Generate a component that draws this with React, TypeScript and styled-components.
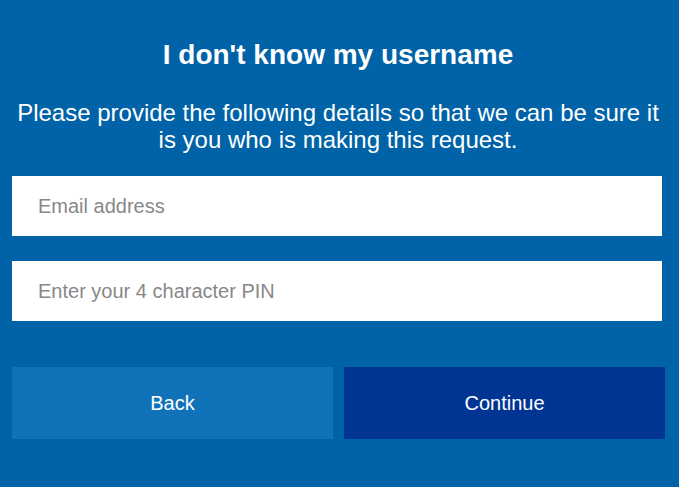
import React from "react";
import styled, { createGlobalStyle } from "styled-components";

const Global = createGlobalStyle`
  html, body { margin: 0; padding: 0; background: #0062a7; }
  body { font-family: "Liberation Sans", Arial, sans-serif; }
  * { box-sizing: border-box; }
`;

const Page = styled.div`
  width: 679px;
  height: 487px;
  background: #0062a7;
  padding: 39px 15px 0 12px;
  display: flex;
  flex-direction: column;
`;

const Title = styled.h1`
  margin: 0;
  color: #fff;
  font-size: 28px;
  font-weight: bold;
  text-align: center;
  line-height: 32px;
`;

const Intro = styled.p`
  margin: 28px 0 0 0;
  color: #fff;
  font-size: 24px;
  line-height: 27px;
  text-align: center;
`;

const Form = styled.div`
  margin-top: 23px;
  display: flex;
  flex-direction: column;
  gap: 25px;
  width: 650px;
`;

const Field = styled.input`
  display: block;
  width: 650px;
  height: 60px;
  border: none;
  outline: none;
  background: #fff;
  padding: 0 26px;
  font-family: "Liberation Sans", Arial, sans-serif;
  font-size: 20px;
  color: #333;
  &::placeholder { color: #888; opacity: 1; }
`;

const Actions = styled.div`
  margin-top: 46px;
  display: grid;
  grid-template-columns: 321px 321px;
  column-gap: 11px;
`;

const Button = styled.button<{ $primary?: boolean }>`
  height: 72px;
  border: none;
  background: ${(p) => (p.$primary ? "#003594" : "#1073b9")};
  color: #fff;
  font-family: "Liberation Sans", Arial, sans-serif;
  font-size: 20px;
  cursor: pointer;
`;

export default function App() {
  return (
    <>
      <Global />
      <Page>
        <Title>I don't know my username</Title>
        <Intro>
          Please provide the following details so that we can be sure it is you who is making this request.
        </Intro>
        <Form>
          <Field type="email" placeholder="Email address" />
          <Field type="text" placeholder="Enter your 4 character PIN" />
        </Form>
        <Actions>
          <Button>Back</Button>
          <Button $primary>Continue</Button>
        </Actions>
      </Page>
    </>
  );
}
